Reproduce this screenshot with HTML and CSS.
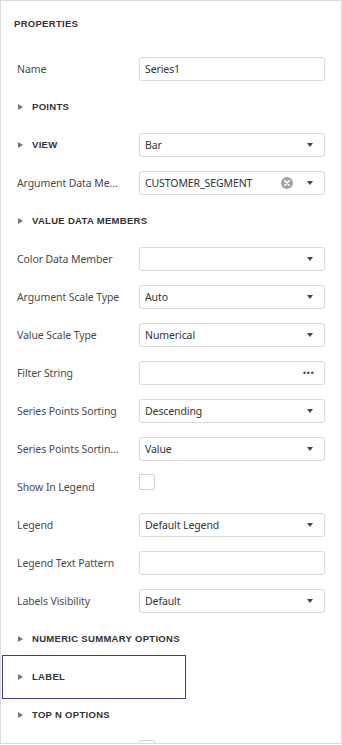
FILE: index.html
```html
<!DOCTYPE html>
<html>
<head>
<meta charset="utf-8">
<link rel="stylesheet" href="styles.css">
</head>
<body>
<div class="panel">
  <div class="title">PROPERTIES</div>

  <div class="row"><div class="label">Name</div><div class="editor"><span class="val">Series1</span></div></div>
  <div class="row group"><div class="ghead"><span class="tri"></span>POINTS</div></div>
  <div class="row group"><div class="ghead short"><span class="tri"></span>VIEW</div><div class="editor"><span class="val">Bar</span><span class="arrow"></span></div></div>
  <div class="row"><div class="label">Argument Data Me...</div><div class="editor"><span class="val">CUSTOMER_SEGMENT</span><span class="clear"><svg width="12" height="12" viewBox="0 0 12 12"><circle cx="6" cy="6" r="6" fill="#a3a3a3"/><path d="M3.8 3.8 L8.2 8.2 M8.2 3.8 L3.8 8.2" stroke="#fff" stroke-width="1.6" stroke-linecap="round"/></svg></span><span class="arrow"></span></div></div>
  <div class="row group"><div class="ghead"><span class="tri"></span>VALUE DATA MEMBERS</div></div>
  <div class="row"><div class="label">Color Data Member</div><div class="editor"><span class="val"></span><span class="arrow"></span></div></div>
  <div class="row"><div class="label">Argument Scale Type</div><div class="editor"><span class="val">Auto</span><span class="arrow"></span></div></div>
  <div class="row"><div class="label">Value Scale Type</div><div class="editor"><span class="val">Numerical</span><span class="arrow"></span></div></div>
  <div class="row"><div class="label">Filter String</div><div class="editor"><span class="val"></span><span class="dots">&middot;&middot;&middot;</span></div></div>
  <div class="row"><div class="label">Series Points Sorting</div><div class="editor"><span class="val">Descending</span><span class="arrow"></span></div></div>
  <div class="row"><div class="label">Series Points Sortin...</div><div class="editor"><span class="val">Value</span><span class="arrow"></span></div></div>
  <div class="row"><div class="label">Show In Legend</div><div class="checkcell"><span class="check"></span></div></div>
  <div class="row"><div class="label">Legend</div><div class="editor"><span class="val">Default Legend</span><span class="arrow"></span></div></div>
  <div class="row"><div class="label">Legend Text Pattern</div><div class="editor"><span class="val"></span></div></div>
  <div class="row"><div class="label">Labels Visibility</div><div class="editor"><span class="val">Default</span><span class="arrow"></span></div></div>
  <div class="row group"><div class="ghead"><span class="tri"></span>NUMERIC SUMMARY OPTIONS</div></div>
  <div class="row group"><div class="ghead focused"><span class="tri"></span>LABEL</div></div>
  <div class="row group"><div class="ghead"><span class="tri"></span>TOP N OPTIONS</div></div>
  <div class="row"><div class="label"></div><div class="checkcell"><span class="check"></span></div></div>
</div>
</body>
</html>
```
FILE: styles.css
```css
html, body {
  margin: 0;
  padding: 0;
  background: #fff;
}
.panel {
  box-sizing: border-box;
  width: 342px;
  height: 744px;
  border: 1px solid #dcdcdc;
  overflow: hidden;
  font-family: "Noto Sans", "Open Sans", sans-serif;
  color: #4a4a4a;
}
.title {
  height: 48.5px;
  box-sizing: border-box;
  padding: 17px 0 0 13px;
  font-family: "Liberation Sans", Arial, sans-serif;
  font-weight: bold;
  font-size: 9.5px;
  letter-spacing: 0.3px;
  color: #333;
}
.row {
  height: 38px;
  display: flex;
  align-items: center;
  padding: 0 16px 0 16px;
}
.label {
  width: 122px;
  flex: none;
  font-size: 10.5px;
  letter-spacing: -0.1px;
  white-space: nowrap;
  overflow: hidden;
}
.editor {
  flex: 1;
  height: 24px;
  box-sizing: border-box;
  border: 1px solid #d9d9d9;
  border-radius: 3px;
  display: flex;
  align-items: center;
  padding: 0 10px 0 5px;
  font-size: 10.5px;
  letter-spacing: -0.1px;
  color: #333;
}
.val {
  flex: 1;
  white-space: nowrap;
}
.arrow {
  width: 0;
  height: 0;
  border-left: 3.5px solid transparent;
  border-right: 3.5px solid transparent;
  border-top: 4px solid #444;
  margin-right: 1px;
}
.clear {
  display: flex;
  margin-right: 14px;
}
.dots {
  font-size: 14px;
  font-weight: bold;
  color: #444;
}
.checkcell {
  flex: 1;
  align-self: flex-start;
  padding-top: 6px;
}
.check {
  display: block;
  width: 16px;
  height: 16px;
  box-sizing: border-box;
  border: 1px solid #cfcfcf;
  border-radius: 2px;
}
.group {
  padding-left: 1px;
}
.ghead {
  width: 184px;
  flex: none;
  height: 44px;
  box-sizing: border-box;
  display: flex;
  align-items: center;
  padding-left: 15px;
  font-family: "Liberation Sans", Arial, sans-serif;
  font-weight: bold;
  font-size: 9.5px;
  letter-spacing: 0.3px;
  color: #333;
  border: 1px solid transparent;
}
.ghead.short {
  width: 137px;
}
.ghead.focused {
  border-color: #3f4270;
}
.tri {
  width: 0;
  height: 0;
  border-top: 3px solid transparent;
  border-bottom: 3px solid transparent;
  border-left: 5px solid #777;
  margin-right: 9px;
}
```
